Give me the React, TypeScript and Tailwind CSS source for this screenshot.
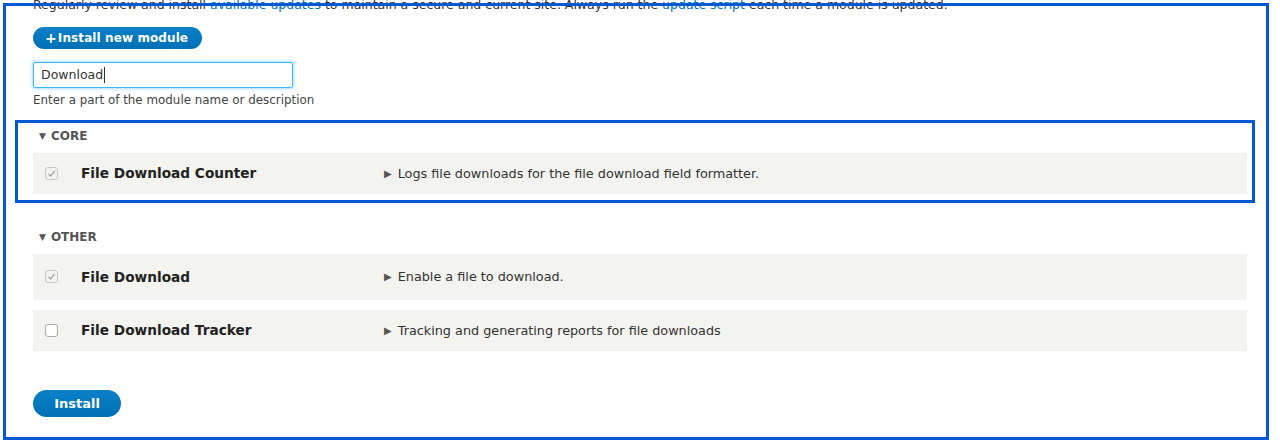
import React from "react";

const font = { fontFamily: '"DejaVu Sans", Verdana, sans-serif' };

function Check({ checked }: { checked: boolean }) {
  return (
    <span
      className={`inline-flex h-[13px] w-[13px] items-center justify-center rounded-[3px] border ${
        checked ? "border-[#c8c8c8] bg-[#f2f2f0]" : "border-[#a9a9a9] bg-white"
      }`}
    >
      {checked && (
        <svg width="9" height="9" viewBox="0 0 9 9">
          <path d="M1.5 4.8 L3.6 7 L7.6 1.8" fill="none" stroke="#a0a0a0" strokeWidth="1.2" />
        </svg>
      )}
    </span>
  );
}

function Row({
  title,
  desc,
  checked,
  h,
}: {
  title: string;
  desc: string;
  checked: boolean;
  h: string;
}) {
  return (
    <div className={`flex items-center bg-[#f3f3ef] ${h}`}>
      <div className="flex w-[48px] justify-end pr-[23px]">
        <Check checked={checked} />
      </div>
      <div className="w-[303px] text-[13.7px] font-bold text-[#222]">{title}</div>
      <div className="flex items-center text-[12.8px] text-[#333]">
        <span className="mr-[6px] text-[10px] text-[#555]">▶</span>
        {desc}
      </div>
    </div>
  );
}

function Heading({ label }: { label: string }) {
  return (
    <div className="flex h-[33px] items-center pl-[6px] text-[12px] font-bold uppercase text-[#555]">
      <span className="mr-[5px] text-[9px]">▼</span>
      {label}
    </div>
  );
}

export default function App() {
  return (
    <div className="relative h-[445px] w-[1280px] overflow-hidden bg-white" style={font}>
      <div className="px-[33px]">
        <p className="-mt-[4px] h-[18px] whitespace-nowrap text-[12.5px] leading-[18px] text-[#333]">
          Regularly review and install{" "}
          <span className="text-[#0074bd]">available updates</span> to maintain a secure and
          current site. Always run the <span className="text-[#0074bd]">update script</span>{" "}
          each time a module is updated.
        </p>
        <div className="mt-[13px] flex">
          <button className="flex h-[22px] items-center rounded-full bg-gradient-to-b from-[#0a80c8] to-[#0070b5] pl-[12px] pr-[14px] text-[12px] font-bold tracking-[0.1px] text-white">
            <span className="mr-[1px] text-[14px] leading-none">+</span>Install new module
          </button>
        </div>
        <div className="mt-[13px] flex h-[26px] w-[260px] items-center rounded-[2px] border border-[#40b6ff] px-[7px] text-[12.5px] text-[#333] shadow-[0_0_3px_1px_rgba(64,182,255,0.45)]">
          Download<span className="ml-[1px] h-[16px] w-px bg-[#333]" />
        </div>
        <div className="mt-[4px] text-[11.9px] text-[#444]">
          Enter a part of the module name or description
        </div>
        <div className="mt-[10px]">
          <Heading label="Core" />
          <Row
            title="File Download Counter"
            desc="Logs file downloads for the file download field formatter."
            checked
            h="h-[41px]"
          />
        </div>
        <div className="mt-[27px]">
          <Heading label="Other" />
          <Row title="File Download" desc="Enable a file to download." checked h="h-[46px]" />
          <div className="mt-[10px]">
            <Row
              title="File Download Tracker"
              desc="Tracking and generating reports for file downloads"
              checked={false}
              h="h-[41px]"
            />
          </div>
        </div>
        <div className="mt-[39px] flex">
          <button className="flex h-[27px] w-[88px] items-center justify-center rounded-full bg-gradient-to-b from-[#0a80c8] to-[#0070b5] text-[13px] font-bold text-white">
            Install
          </button>
        </div>
      </div>
      <div className="pointer-events-none absolute left-[3px] top-[3px] h-[437px] w-[1266px] border-[3px] border-[#0059d1]" />
      <div className="pointer-events-none absolute left-[15px] top-[120px] h-[83px] w-[1240px] border-[3px] border-[#0059d1]" />
    </div>
  );
}
